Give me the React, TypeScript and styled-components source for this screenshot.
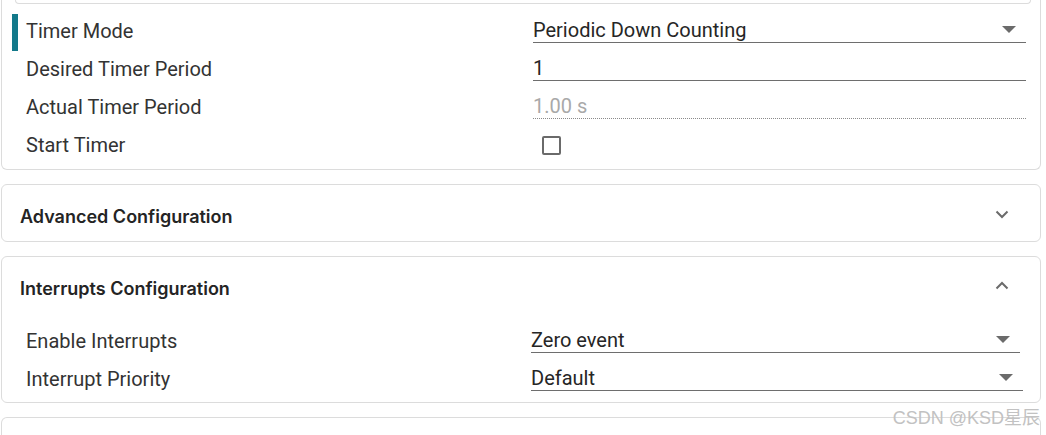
import React from "react";
import styled, { createGlobalStyle } from "styled-components";

const GlobalStyle = createGlobalStyle`
  html, body {
    margin: 0;
    padding: 0;
    background: #ffffff;
    font-family: Roboto, "Noto Sans", sans-serif;
    overflow: hidden;
  }
`;

const Page = styled.div`
  display: flex;
  flex-direction: column;
  gap: 14px;
  padding: 0 2px 0 1px;
  width: 1043px;
  height: 435px;
  box-sizing: border-box;
`;

const Card = styled.section<{ $openTop?: boolean }>`
  border: 1px solid #dcdcdc;
  border-top: ${(p) => (p.$openTop ? "none" : "1px solid #dcdcdc")};
  border-radius: ${(p) => (p.$openTop ? "0 0 6px 6px" : "6px")};
  background: #fff;
  box-sizing: border-box;
`;

const PrevTail = styled.div`
  height: 3px;
  margin: 0 9px 0 13px;
  border: 1px solid #dcdcdc;
  border-top: none;
  border-radius: 0 0 6px 6px;
`;

const Rows = styled.div<{ $pad: string; $valueCol: number }>`
  display: flex;
  flex-direction: column;
  padding: ${(p) => p.$pad};
  --value-col: ${(p) => p.$valueCol}px;
`;

const Row = styled.div<{ $active?: boolean }>`
  display: grid;
  grid-template-columns: var(--value-col) 1fr;
  align-items: center;
  height: 38px;
  position: relative;
  padding-left: 24px;
  &::before {
    content: "";
    display: ${(p) => (p.$active ? "block" : "none")};
    position: absolute;
    left: 10px;
    top: 2px;
    width: 6px;
    height: 37px;
    background: #13798a;
  }
`;

const Label = styled.span`
  font-size: 20px;
  color: #333333;
`;

const Field = styled.div<{ $line: "solid" | "dotted"; $width: number }>`
  display: flex;
  align-items: center;
  justify-content: space-between;
  width: ${(p) => p.$width}px;
  height: 26px;
  margin-bottom: 2px;
  border-bottom: 1px ${(p) => p.$line} ${(p) => (p.$line === "dotted" ? "#8a8a8a" : "#6e6e6e")};
  box-sizing: border-box;
`;

const Value = styled.span<{ $muted?: boolean }>`
  font-size: 20px;
  line-height: 24px;
  color: ${(p) => (p.$muted ? "#a9a9a9" : "#262626")};
`;

const Caret = styled.span`
  width: 0;
  height: 0;
  margin-right: 10px;
  border-left: 7px solid transparent;
  border-right: 7px solid transparent;
  border-top: 7px solid #6b6b6b;
`;

const Checkbox = styled.span`
  width: 19px;
  height: 19px;
  margin: 0 0 0 9px;
  border: 2px solid #6a6a6a;
  border-radius: 2px;
  box-sizing: border-box;
`;

const Header = styled.div`
  display: flex;
  align-items: center;
  justify-content: space-between;
  height: 56px;
  padding: 7px 30px 0 18px;
  box-sizing: border-box;
  svg {
    margin-bottom: 6px;
  }
`;

const Title = styled.h3`
  margin: 0;
  font-family: Inter, "Open Sans", sans-serif;
  font-size: 18px;
  font-weight: 600;
  color: #242424;
`;

const Chevron = ({ up }: { up?: boolean }) => (
  <svg width="16" height="16" viewBox="0 0 16 16" fill="none">
    <path
      d={up ? "M2.5 10.5 L8 5 L13.5 10.5" : "M2.5 5.5 L8 11 L13.5 5.5"}
      stroke="#6b6b6b"
      strokeWidth="2"
    />
  </svg>
);

const LastCard = styled(Card)`
  flex: 1;
  position: relative;
  border-bottom: none;
  border-radius: 6px 6px 0 0;
`;

const Watermark = styled.span`
  position: absolute;
  right: 0;
  top: -10px;
  font-family: "Liberation Sans", "Noto Sans CJK SC", sans-serif;
  font-size: 18px;
  line-height: 20px;
  color: #c2c2c2;
`;

function Select({ value, width }: { value: string; width: number }) {
  return (
    <Field $line="solid" $width={width}>
      <Value>{value}</Value>
      <Caret />
    </Field>
  );
}

export default function App() {
  return (
    <>
      <GlobalStyle />
      <Page>
        <Card $openTop>
          <PrevTail />
          <Rows $pad="8px 0 5px 0" $valueCol={507}>
            <Row $active>
              <Label>Timer Mode</Label>
              <Select value="Periodic Down Counting" width={493} />
            </Row>
            <Row>
              <Label>Desired Timer Period</Label>
              <Field $line="solid" $width={493}>
                <Value>1</Value>
              </Field>
            </Row>
            <Row>
              <Label>Actual Timer Period</Label>
              <Field $line="dotted" $width={493}>
                <Value $muted>1.00 s</Value>
              </Field>
            </Row>
            <Row>
              <Label>Start Timer</Label>
              <Checkbox />
            </Row>
          </Rows>
        </Card>

        <Card>
          <Header>
            <Title>Advanced Configuration</Title>
            <Chevron />
          </Header>
        </Card>

        <Card>
          <Header>
            <Title>Interrupts Configuration</Title>
            <Chevron up />
          </Header>
          <Rows $pad="9px 0 4px 0" $valueCol={505}>
            <Row>
              <Label>Enable Interrupts</Label>
              <Select value="Zero event" width={489} />
            </Row>
            <Row>
              <Label>Interrupt Priority</Label>
              <Select value="Default" width={492} />
            </Row>
          </Rows>
        </Card>

        <LastCard>
          <Watermark>CSDN @KSD星辰</Watermark>
        </LastCard>
      </Page>
    </>
  );
}
